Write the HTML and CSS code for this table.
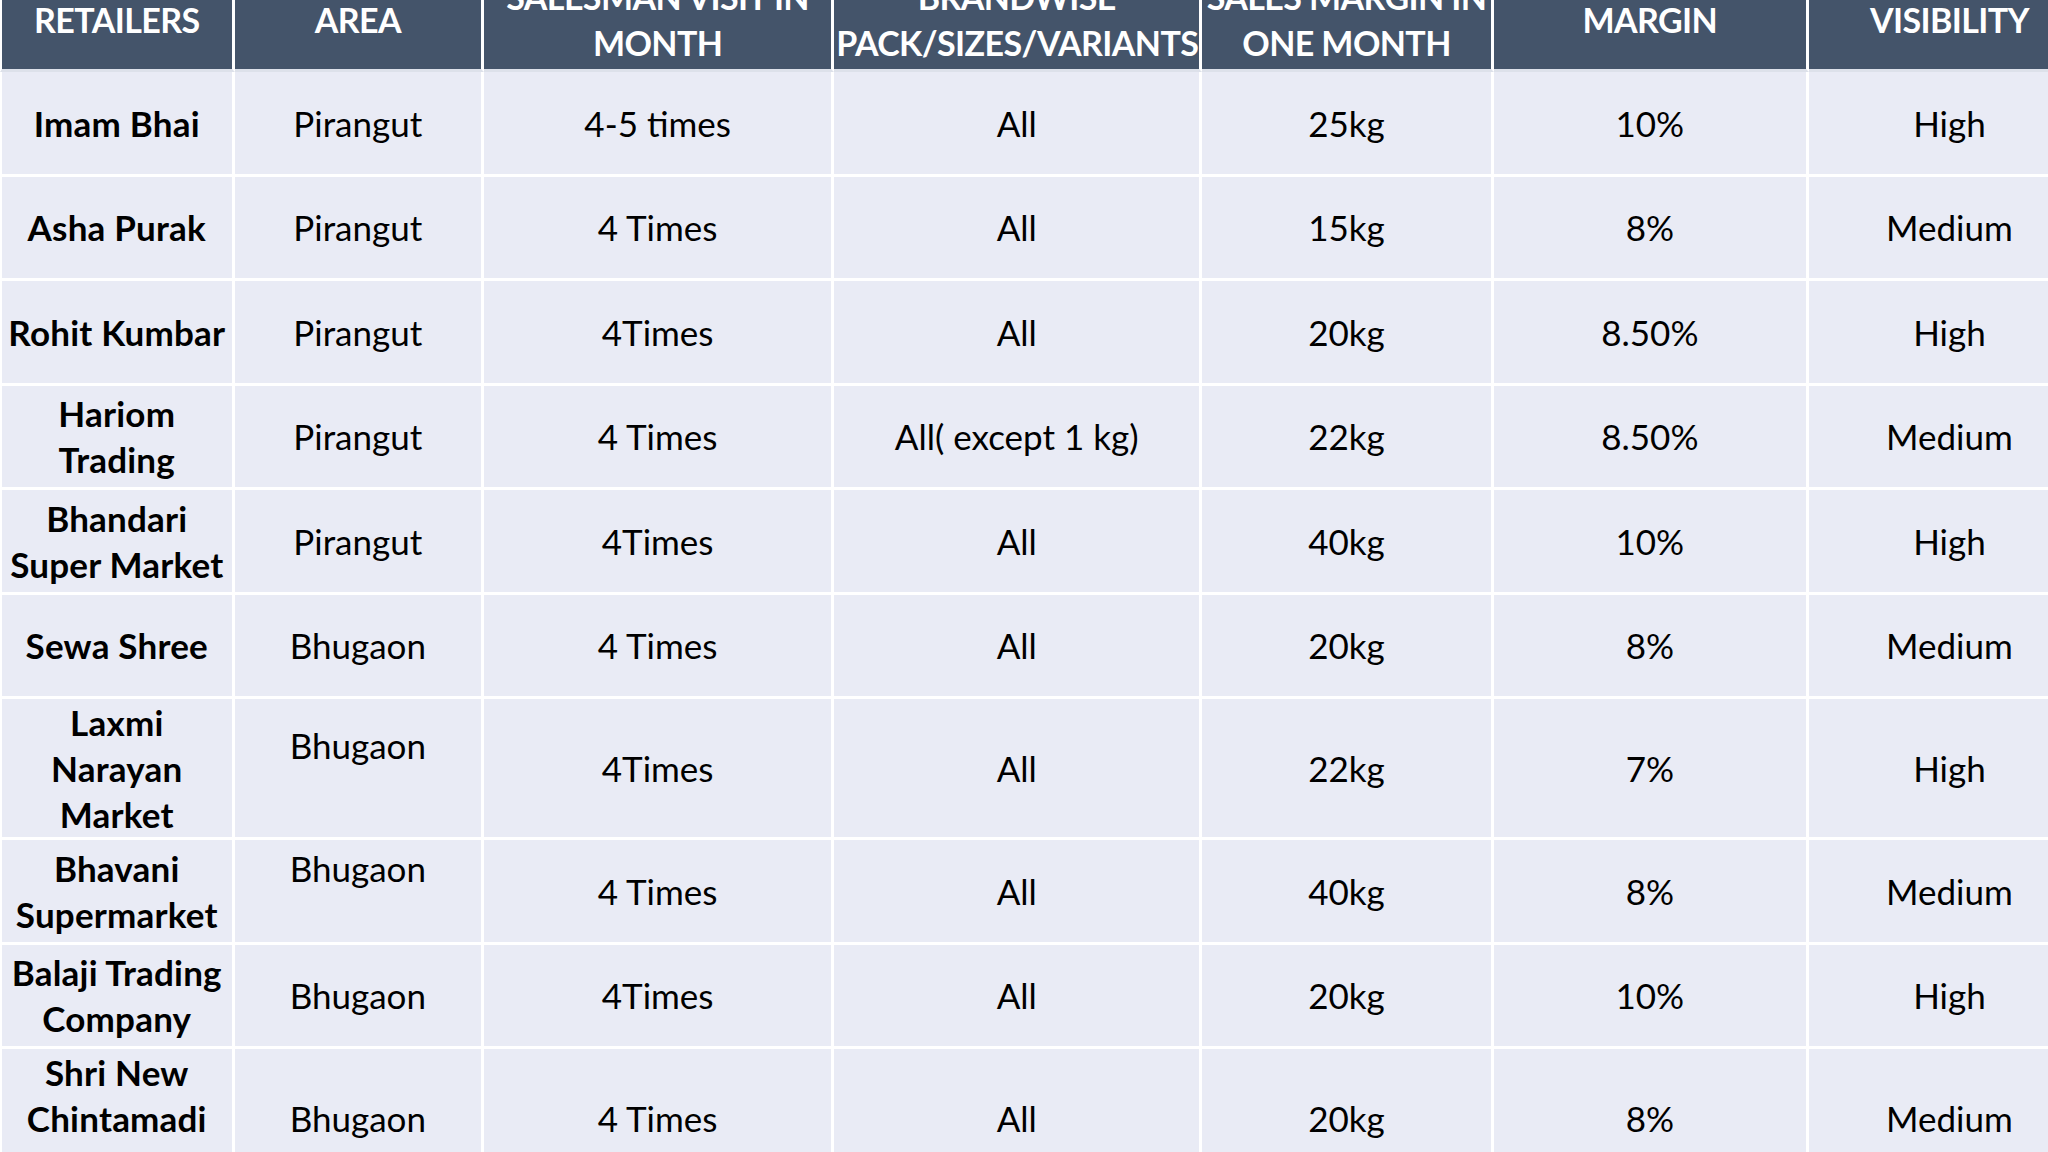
FILE: index.html
```html
<!DOCTYPE html>
<html>
<head>
<meta charset="utf-8">
<link rel="stylesheet" href="styles.css">
</head>
<body>
<table class="grid">
  <colgroup>
    <col class="c1"><col class="c2"><col class="c3"><col class="c4"><col class="c5"><col class="c6"><col class="c7">
  </colgroup>
  <thead>
    <tr class="head">
      <th>RETAILERS</th>
      <th>AREA</th>
      <th>SALESMAN VISIT IN<br>MONTH</th>
      <th>BRANDWISE<br>PACK/SIZES/VARIANTS</th>
      <th>SALES MARGIN IN<br>ONE MONTH</th>
      <th>MARGIN</th>
      <th>VISIBILITY</th>
    </tr>
  </thead>
  <tbody>
    <tr class="row">
      <td class="name">Imam Bhai</td><td>Pirangut</td><td>4-5 times</td><td>All</td><td>25kg</td><td>10%</td><td>High</td>
    </tr>
    <tr class="row">
      <td class="name">Asha Purak</td><td>Pirangut</td><td>4 Times</td><td>All</td><td>15kg</td><td>8%</td><td>Medium</td>
    </tr>
    <tr class="row">
      <td class="name">Rohit Kumbar</td><td>Pirangut</td><td>4Times</td><td>All</td><td>20kg</td><td>8.50%</td><td>High</td>
    </tr>
    <tr class="row">
      <td class="name">Hariom<br>Trading</td><td>Pirangut</td><td>4 Times</td><td>All( except 1 kg)</td><td>22kg</td><td>8.50%</td><td>Medium</td>
    </tr>
    <tr class="row">
      <td class="name">Bhandari<br>Super Market</td><td>Pirangut</td><td>4Times</td><td>All</td><td>40kg</td><td>10%</td><td>High</td>
    </tr>
    <tr class="row">
      <td class="name">Sewa Shree</td><td>Bhugaon</td><td>4 Times</td><td>All</td><td>20kg</td><td>8%</td><td>Medium</td>
    </tr>
    <tr class="row tall">
      <td class="name">Laxmi<br>Narayan<br>Market</td><td>Bhugaon<br>&nbsp;</td><td>4Times</td><td>All</td><td>22kg</td><td>7%</td><td>High</td>
    </tr>
    <tr class="row">
      <td class="name">Bhavani<br>Supermarket</td><td>Bhugaon<br>&nbsp;</td><td>4 Times</td><td>All</td><td>40kg</td><td>8%</td><td>Medium</td>
    </tr>
    <tr class="row">
      <td class="name">Balaji Trading<br>Company</td><td>Bhugaon</td><td>4Times</td><td>All</td><td>20kg</td><td>10%</td><td>High</td>
    </tr>
    <tr class="row">
      <td class="name">Shri New<br>Chintamadi<br>Traders</td><td>Bhugaon</td><td>4 Times</td><td>All</td><td>20kg</td><td>8%</td><td>Medium</td>
    </tr>
  </tbody>
</table>
</body>
</html>
```
FILE: styles.css
```css
html, body {
  margin: 0;
  padding: 0;
  background: #e9ebf5;
  overflow: hidden;
}

.grid {
  table-layout: fixed;
  width: 2093px;
  border-collapse: separate;
  border-spacing: 0;
  margin-top: -29px;
  margin-left: 0;
  font-family: "Lato", "Liberation Sans", sans-serif;
  font-size: 35px;
  line-height: 46px;
  color: #000;
}

.c1 { width: 234.5px; }
.c2 { width: 249.5px; }
.c3 { width: 350px; }
.c4 { width: 368px; }
.c5 { width: 291.5px; }
.c6 { width: 315px; }
.c7 { width: 284px; }

.grid th,
.grid td {
  padding: 0 2px;
  text-align: center;
  vertical-align: middle;
  white-space: nowrap;
  border-right: 3px solid #ffffff;
  border-bottom: 3px solid #ffffff;
  overflow: hidden;
}

.grid th:first-child,
.grid td:first-child {
  border-left: 2px solid #ffffff;
}

.head th {
  height: 98px;
  background: #44546a;
  color: #ffffff;
  font-size: 34px;
  letter-spacing: -0.6px;
  font-weight: 700;
  border-bottom-color: #dde1ea;
}

.row td {
  height: 101.5px;
  background: #e9ebf5;
  font-weight: 400;
}

.row.tall td {
  height: 136px;
}

.row td.name {
  font-weight: 700;
  letter-spacing: 0.2px;
}
```
